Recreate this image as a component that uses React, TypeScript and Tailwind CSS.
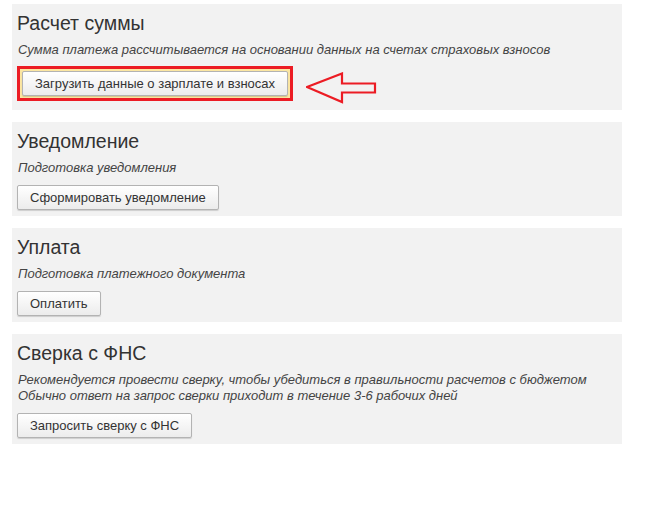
const font = { fontFamily: '"Liberation Sans", Arial, sans-serif' };

const Btn = ({ label }: { label: string }) => (
  <button className="h-[25px] px-[12px] rounded-[2px] border border-[#b3b3b3] bg-gradient-to-b from-white to-[#ececec] text-[13px] text-[#333] shadow-[0_1px_1px_rgba(0,0,0,0.15)] leading-none">
    {label}
  </button>
);

const Panel = ({ title, lines, children }: { title: string; lines: string[]; children: React.ReactNode }) => (
  <div className="bg-[#f2f2f2] pt-[8px] pb-[6px] px-[5px]">
    <div className="text-[19.5px] leading-[22px] text-[#333]">{title}</div>
    <div className="mt-2 text-[13px] leading-[16px] italic text-[#444] pl-[1px]">
      {lines.map((l) => (
        <div key={l}>{l}</div>
      ))}
    </div>
    <div className="mt-[9px]">{children}</div>
  </div>
);

export default function App() {
  return (
    <div className="w-[658px] h-[512px] bg-white pt-[4px] pl-[12px] pr-[36px]" style={font}>
      <div className="flex flex-col gap-[12px]">
        <Panel title="Расчет суммы" lines={["Сумма платежа рассчитывается на основании данных на счетах страховых взносов"]}>
          <div className="flex items-start -mt-[1px]">
            <div className="border-[3px] border-[#ec1c24] bg-[#fbe6a2] p-[2px]">
              <Btn label="Загрузить данные о зарплате и взносах" />
            </div>
            <svg width="72" height="32" viewBox="0 0 72 32" className="ml-[13px] mt-[6px]">
              <path
                d="M1 15 L36 1.5 L36 11.5 L69 11.5 L69 20.5 L36 20.5 L36 30 Z"
                fill="none"
                stroke="#ec1c24"
                strokeWidth="2.2"
                strokeLinejoin="miter"
              />
            </svg>
          </div>
        </Panel>
        <Panel title="Уведомление" lines={["Подготовка уведомления"]}>
          <Btn label="Сформировать уведомление" />
        </Panel>
        <Panel title="Уплата" lines={["Подготовка платежного документа"]}>
          <Btn label="Оплатить" />
        </Panel>
        <Panel
          title="Сверка с ФНС"
          lines={[
            "Рекомендуется провести сверку, чтобы убедиться в правильности расчетов с бюджетом",
            "Обычно ответ на запрос сверки приходит в течение 3-6 рабочих дней",
          ]}
        >
          <Btn label="Запросить сверку с ФНС" />
        </Panel>
      </div>
    </div>
  );
}
